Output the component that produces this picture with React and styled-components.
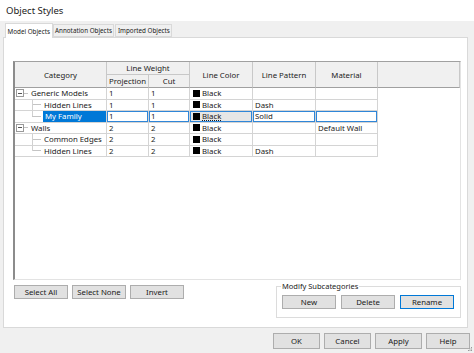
import styled, { createGlobalStyle } from "styled-components";

const Global = createGlobalStyle`
  html, body { margin: 0; padding: 0; background: #f0f0f0; }
  * { box-sizing: border-box; }
`;

const Window = styled.div`
  width: 474px;
  height: 353px;
  background: #f0f0f0;
  display: flex;
  flex-direction: column;
  font-family: "Noto Sans", "Open Sans", sans-serif;
  font-size: 7.8px;
  color: #1a1a1a;
  overflow: hidden;
`;

const TitleBar = styled.div`
  height: 21px;
  background: #fff;
  padding-left: 6px;
  display: flex;
  align-items: center;
  font-size: 9.5px;
  color: #222;
`;

const TabStrip = styled.div`
  height: 16px;
  padding-left: 5px;
  display: flex;
  align-items: flex-end;
  font-size: 6.3px;
`;

const Tab = styled.div`
  height: ${(p) => (p.$active ? "15px" : "13px")};
  padding: 0 1.5px;
  display: flex;
  align-items: center;
  background: ${(p) => (p.$active ? "#fff" : "#f0f0f0")};
  border: 1px solid #d9d9d9;
  border-bottom: ${(p) => (p.$active ? "none" : "1px solid #d9d9d9")};
  margin-right: ${(p) => (p.$active ? "0" : "1px")};
  position: relative;
  z-index: 1;
  margin-bottom: ${(p) => (p.$active ? "-1px" : "0")};
`;

const Panel = styled.div`
  margin: 0 6px 0 3px;
  height: 291px;
  background: #fff;
  border: 1px solid #d9d9d9;
  padding: 23px 6px 0 9px;
  display: flex;
  flex-direction: column;
`;

const GridFrame = styled.div`
  height: 219px;
  border-top: 1px solid #a0a0a0;
  border-left: 2px solid #8c8c8c;
  border-right: 1px solid #e3e3e3;
  border-bottom: 1px solid #e3e3e3;
  display: grid;
  grid-template-columns: 92px 42px 41px 63px 63px 62px 1fr;
  grid-template-rows: 13px 13px repeat(6, 11.5px) 1fr;
`;

const Head = styled.div`
  background: #f0f0f0;
  border-right: 1px solid #c8c8c8;
  border-bottom: 1px solid ${(p) => (p.$low ? "#a0a0a0" : "#c8c8c8")};
  display: flex;
  align-items: center;
  justify-content: center;
  grid-column: ${(p) => p.$col || "auto"};
  grid-row: ${(p) => p.$row || "auto"};
  color: #222;
`;

const Cell = styled.div`
  border-right: 1px solid #d4d4d4;
  border-bottom: 1px solid #d4d4d4;
  display: flex;
  align-items: center;
  padding-left: 2px;
  white-space: nowrap;
  overflow: hidden;
  ${(p) => p.$sel && "box-shadow: inset 0 0 0 1px #2f86d8;"}
  ${(p) => p.$btn && "background: #e6e6e6;"}
`;

const Blank = styled.div`
  grid-column: 1 / span 7;
`;

const CatCell = styled.div`
  border-right: 1px solid #d4d4d4;
  border-bottom: 1px solid #d4d4d4;
  display: flex;
  align-items: center;
  position: relative;
  white-space: nowrap;
`;

const Expander = styled.div`
  width: 8px;
  height: 8px;
  margin-left: 1px;
  border: 1px solid #9a9a9a;
  background: #fff;
  position: relative;
  &::after {
    content: "";
    position: absolute;
    left: 1px;
    right: 1px;
    top: 2.5px;
    height: 1px;
    background: #555;
  }
`;

const Branch = styled.div`
  width: ${(p) => p.$w}px;
  height: 1px;
  background: #c4c4c4;
  margin: 0 2px 0 ${(p) => p.$ml}px;
`;

const VLine = styled.div`
  position: absolute;
  left: 17px;
  top: 0;
  bottom: ${(p) => (p.$last ? "50%" : "0")};
  width: 1px;
  background: #d0d0d0;
`;

const Label = styled.span`
  padding: 0 ${(p) => (p.$sel ? "2px" : "1px")};
  height: 100%;
  display: flex;
  align-items: center;
  flex: ${(p) => (p.$sel ? "1" : "none")};
  background: ${(p) => (p.$sel ? "#0078d7" : "transparent")};
  color: ${(p) => (p.$sel ? "#fff" : "#1a1a1a")};
`;

const Swatch = styled.span`
  width: 7px;
  height: 7px;
  background: #000;
  margin: 0 2px 0 1px;
  flex: none;
`;

const BlackText = styled.span`
  text-decoration: ${(p) => (p.$u ? "underline dotted" : "none")};
`;

const BottomRow = styled.div`
  display: flex;
  justify-content: space-between;
  padding-top: 1px;
`;

const ButtonGroup = styled.div`
  display: flex;
  gap: ${(p) => p.$gap || 4}px;
  margin-top: ${(p) => p.$mt || 0}px;
  padding-left: ${(p) => p.$pl || 0}px;
`;

const Button = styled.div`
  width: ${(p) => p.$w || 54}px;
  height: ${(p) => p.$h || 14}px;
  background: #e1e1e1;
  border: 1px solid ${(p) => (p.$focus ? "#0078d7" : "#adadad")};
  display: flex;
  align-items: center;
  justify-content: center;
  color: #1a1a1a;
`;

const GroupBox = styled.fieldset`
  margin: 0;
  width: 185px;
  height: 37px;
  border: 1px solid #dcdcdc;
  padding: 4px 0 0 5px;
  display: flex;
  align-items: flex-start;
`;

const Legend = styled.legend`
  padding: 0 1px;
  margin-left: -1px;
  font-size: 7.5px;
`;

const Footer = styled.div`
  flex: 1;
  display: flex;
  justify-content: flex-end;
  align-items: flex-start;
  padding: 5px 4px 0 0;
  position: relative;
`;

const Grip = styled.svg`
  position: absolute;
  right: 1px;
  bottom: 1px;
`;

const rows = [
  { name: "Generic Models", level: 0, p: "1", c: "1", pat: "", mat: "" },
  { name: "Hidden Lines", level: 1, p: "1", c: "1", pat: "Dash", mat: "" },
  { name: "My Family", level: 1, p: "1", c: "1", pat: "Solid", mat: "", sel: true, last: true },
  { name: "Walls", level: 0, p: "2", c: "2", pat: "", mat: "Default Wall" },
  { name: "Common Edges", level: 1, p: "2", c: "2", pat: "", mat: "" },
  { name: "Hidden Lines", level: 1, p: "2", c: "2", pat: "Dash", mat: "", last: true },
];

const Category = ({ row }) => (
  <CatCell>
    {row.level === 0 ? (
      <>
        <Expander />
        <Branch $w={4} $ml={0} />
      </>
    ) : (
      <>
        <VLine $last={row.last} />
        <Branch $w={9} $ml={17} />
      </>
    )}
    <Label $sel={row.sel}>{row.name}</Label>
  </CatCell>
);

export default function App() {
  return (
    <Window>
      <Global />
      <TitleBar>Object Styles</TitleBar>
      <TabStrip>
        <Tab $active>Model Objects</Tab>
        <Tab>Annotation Objects</Tab>
        <Tab>Imported Objects</Tab>
      </TabStrip>
      <Panel>
        <GridFrame>
          <Head $row="1 / span 2" $low>Category</Head>
          <Head $col="2 / span 2">Line Weight</Head>
          <Head $row="1 / span 2" $col="4" $low>Line Color</Head>
          <Head $row="1 / span 2" $col="5" $low>Line Pattern</Head>
          <Head $row="1 / span 2" $col="6" $low>Material</Head>
          <Head $row="1 / span 2" $col="7" $low />
          <Head $row="2" $col="2" $low>Projection</Head>
          <Head $row="2" $col="3" $low>Cut</Head>
          {rows.map((r, i) => [
            <Category key={"c" + i} row={r} />,
            <Cell key={"p" + i} $sel={r.sel}>{r.p}</Cell>,
            <Cell key={"k" + i} $sel={r.sel}>{r.c}</Cell>,
            <Cell key={"l" + i} $sel={r.sel} $btn={r.sel}>
              <Swatch />
              <BlackText $u={r.sel}>Black</BlackText>
            </Cell>,
            <Cell key={"t" + i} $sel={r.sel}>{r.pat}</Cell>,
            <Cell key={"m" + i} $sel={r.sel}>{r.mat}</Cell>,
            <div key={"e" + i} />,
          ])}
          <Blank />
        </GridFrame>
        <BottomRow>
          <ButtonGroup $mt={4} $pl={1}>
            <Button>Select All</Button>
            <Button>Select None</Button>
            <Button>Invert</Button>
          </ButtonGroup>
          <GroupBox>
            <Legend>Modify Subcategories</Legend>
            <ButtonGroup $gap={5}>
              <Button>New</Button>
              <Button>Delete</Button>
              <Button $focus>Rename</Button>
            </ButtonGroup>
          </GroupBox>
        </BottomRow>
      </Panel>
      <Footer>
        <ButtonGroup $gap={4}>
          <Button $w={47} $h={16}>OK</Button>
          <Button $w={47} $h={16}>Cancel</Button>
          <Button $w={47} $h={16}>Apply</Button>
          <Button $w={44} $h={16}>Help</Button>
        </ButtonGroup>
        <Grip width="5" height="5" viewBox="0 0 5 5">
          <rect x="3" y="0" width="1" height="1" fill="#999" />
          <rect x="1.5" y="1.5" width="1" height="1" fill="#999" />
          <rect x="3" y="1.5" width="1" height="1" fill="#999" />
          <rect x="0" y="3" width="1" height="1" fill="#999" />
          <rect x="1.5" y="3" width="1" height="1" fill="#999" />
          <rect x="3" y="3" width="1" height="1" fill="#999" />
        </Grip>
      </Footer>
    </Window>
  );
}
